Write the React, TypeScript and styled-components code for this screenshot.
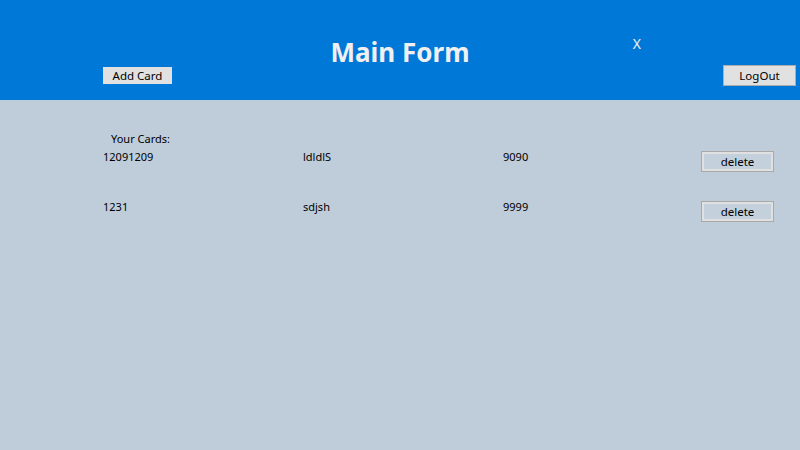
import styled, { createGlobalStyle } from 'styled-components';

const GlobalStyle = createGlobalStyle`
  html, body {
    margin: 0;
    padding: 0;
    width: 800px;
    height: 450px;
    overflow: hidden;
    background: #bfccda;
    font-family: 'Noto Sans', 'Open Sans', sans-serif;
  }
`;

const Window = styled.div`
  width: 800px;
  height: 450px;
  display: flex;
  flex-direction: column;
  background: #bfccda;
`;

const Header = styled.header`
  height: 100px;
  background: #0078d7;
  display: grid;
  grid-template-columns: 1fr auto 1fr;
  align-items: start;
`;

const HeaderLeft = styled.div`
  display: flex;
  padding: 67px 0 0 103px;
`;

const HeaderRight = styled.div`
  display: flex;
  justify-content: flex-end;
  align-items: flex-start;
  padding-right: 4px;
`;

const Title = styled.h1`
  margin: 36px 0 0;
  font-size: 26px;
  line-height: 32px;
  font-weight: 700;
  color: #f0f0f0;
`;

const CloseMark = styled.span`
  margin: 35px 82px 0 0;
  font-size: 14px;
  line-height: 18px;
  color: #f0f0f0;
`;

const FormButton = styled.button<{ $w: number; $h: number; $top?: number; $border?: boolean }>`
  width: ${(p) => p.$w}px;
  height: ${(p) => p.$h}px;
  margin-top: ${(p) => p.$top ?? 0}px;
  padding: 0;
  box-sizing: border-box;
  background: #e1e1e1;
  border: 1px solid ${(p) => (p.$border ? '#adadad' : '#e1e1e1')};
  font-family: 'Noto Sans', sans-serif;
  font-size: 11.5px;
  line-height: 14px;
  color: #000;
`;

const Content = styled.main`
  flex: 1;
  padding: 31px 0 0 0;
  display: flex;
  flex-direction: column;
`;

const Label = styled.div`
  padding-left: 111px;
  font-size: 11px;
  line-height: 16px;
  color: #000;
`;

const CardList = styled.div`
  margin-top: 2px;
  display: flex;
  flex-direction: column;
`;

const CardRow = styled.div`
  height: 50px;
  padding-left: 103px;
  display: grid;
  grid-template-columns: 200px 200px 198px 73px;
  align-items: start;
`;

const Cell = styled.span`
  font-size: 11px;
  line-height: 16px;
  color: #000;
`;

const DeleteButton = styled.button`
  width: 73px;
  height: 21px;
  margin-top: 2px;
  padding: 0;
  box-sizing: border-box;
  background: #c4d0dc;
  border: 1px solid #a9a9a9;
  box-shadow: inset 0 0 0 2px #e0e0e0;
  font-family: 'Noto Sans', sans-serif;
  font-size: 11.5px;
  line-height: 14px;
  color: #000;
`;

const cards = [
  { number: '12091209', name: 'ldldlS', code: '9090' },
  { number: '1231', name: 'sdjsh', code: '9999' },
];

export default function App() {
  return (
    <Window>
      <GlobalStyle />
      <Header>
        <HeaderLeft>
          <FormButton $w={69} $h={17}>Add Card</FormButton>
        </HeaderLeft>
        <Title>Main Form</Title>
        <HeaderRight>
          <CloseMark>X</CloseMark>
          <FormButton $w={73} $h={21} $top={65} $border>
            LogOut
          </FormButton>
        </HeaderRight>
      </Header>
      <Content>
        <Label>Your Cards:</Label>
        <CardList>
          {cards.map((c) => (
            <CardRow key={c.number}>
              <Cell>{c.number}</Cell>
              <Cell>{c.name}</Cell>
              <Cell>{c.code}</Cell>
              <DeleteButton>delete</DeleteButton>
            </CardRow>
          ))}
        </CardList>
      </Content>
    </Window>
  );
}
